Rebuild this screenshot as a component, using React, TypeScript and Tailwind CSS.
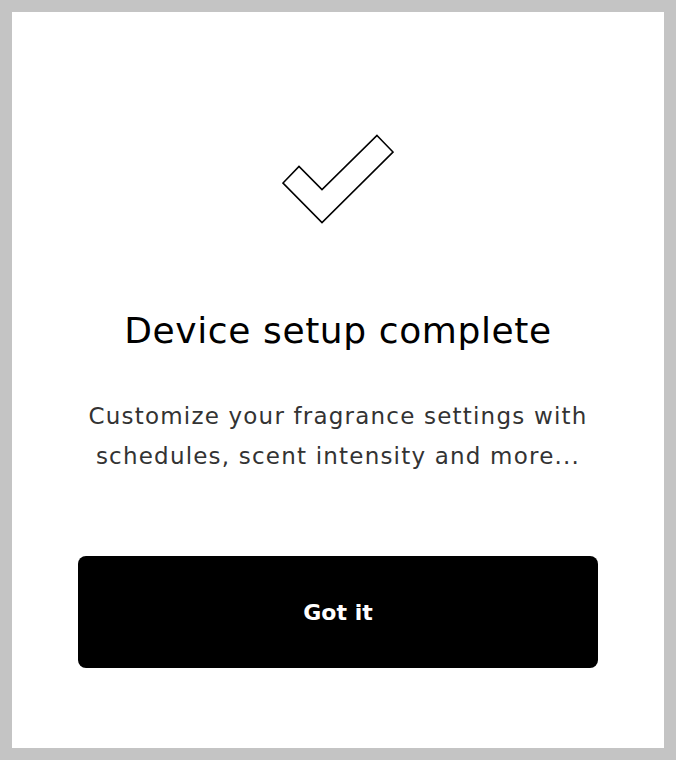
export default function App() {
  return (
    <div className="h-[760px] w-[676px] bg-[#c4c4c4] p-3" style={{ fontFamily: '"DejaVu Sans", sans-serif' }}>
      <div className="flex h-full w-full flex-col items-center bg-white pt-[122px]">
        <svg width="112" height="90" viewBox="282 134 112 90" className="block">
          <polygon
            points="377,135.5 393,152 322,222.5 283,183 299,166.5 322,189.5"
            fill="none"
            stroke="#000"
            strokeWidth="1.6"
            strokeLinejoin="miter"
          />
        </svg>
        <h1 className="mt-[87px] text-[36px] leading-[40px] font-normal tracking-[0.6px] text-black">Device setup complete</h1>
        <p className="mt-[45px] text-center text-[23px] leading-[40px] tracking-[1.2px] text-[#333333]">
          Customize your fragrance settings with
          <br />
          schedules, scent intensity and more...
        </p>
        <button className="mt-[80px] flex h-[112px] w-[520px] items-center justify-center rounded-lg bg-black text-[22px] font-semibold text-white">
          Got it
        </button>
      </div>
    </div>
  );
}
